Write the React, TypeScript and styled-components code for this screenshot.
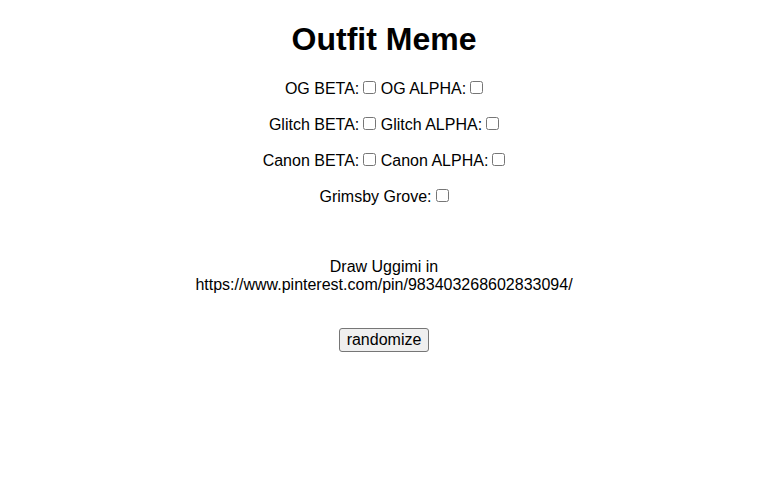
import React, { useState } from 'react';
import styled, { createGlobalStyle } from 'styled-components';

const GlobalStyle = createGlobalStyle`
  body {
    margin: 8px;
    background: #fff;
    color: #000;
    font-family: 'Liberation Sans', Arial, sans-serif;
    font-size: 16px;
  }
`;

const Page = styled.div`
  text-align: center;
`;

const Title = styled.h1`
  font-size: 32px;
  font-weight: bold;
  margin: 13.44px 0 20px;
`;

const OptionRow = styled.p`
  margin: 16px 0;
`;

const Box = styled.input`
  margin: 3px 0 3px 4px;
  vertical-align: baseline;
`;

const Prompt = styled.div`
  margin-top: 52px;
  line-height: 18px;
`;

const RandomButton = styled.button`
  margin-top: 34px;
  font-family: 'Liberation Sans', Arial, sans-serif;
  font-size: 16px;
  line-height: 18px;
  padding: 2px 7px;
  color: #000;
  background: #efefef;
  border: 1px solid #767676;
  border-radius: 3px;
`;

const rows = [
  ['OG BETA', 'OG ALPHA'],
  ['Glitch BETA', 'Glitch ALPHA'],
  ['Canon BETA', 'Canon ALPHA'],
  ['Grimsby Grove'],
];

const App: React.FC = () => {
  const [checked, setChecked] = useState<Record<string, boolean>>({});

  const toggle = (name: string) =>
    setChecked(prev => ({ ...prev, [name]: !prev[name] }));

  return (
    <Page>
      <GlobalStyle />
      <Title>Outfit Meme</Title>
      {rows.map((row, i) => (
        <OptionRow key={i}>
          {row.map((name, j) => (
            <React.Fragment key={name}>
              {j > 0 && ' '}
              {name}:
              <Box
                type="checkbox"
                checked={!!checked[name]}
                onChange={() => toggle(name)}
              />
            </React.Fragment>
          ))}
        </OptionRow>
      ))}
      <Prompt>
        Draw Uggimi in
        <br />
        https://www.pinterest.com/pin/983403268602833094/
      </Prompt>
      <RandomButton>randomize</RandomButton>
    </Page>
  );
};

export default App;
